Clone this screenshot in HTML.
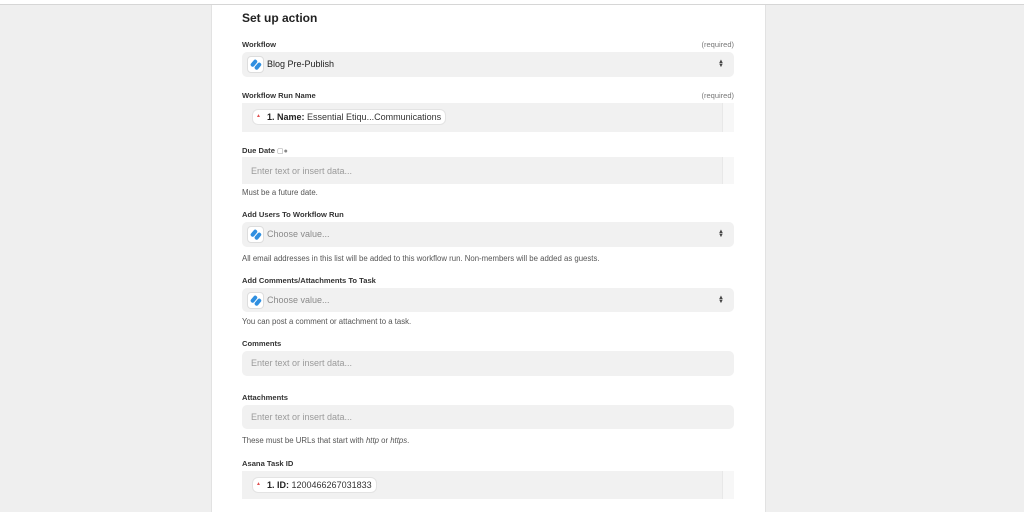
<!DOCTYPE html>
<html><head><style>
body{margin:0;width:1024px;height:512px;background:#efefef;font-family:"Liberation Sans",sans-serif;position:relative;overflow:hidden;}
.top{position:absolute;left:0;top:0;width:1024px;height:4px;background:#fff;border-bottom:1px solid #d6d6d6}
.panel{position:absolute;left:211px;top:5px;width:553px;height:507px;background:#fff;border-left:1px solid #e2e2e2;border-right:1px solid #e2e2e2}
.a{position:absolute;}
h1{position:absolute;left:242px;top:11px;margin:0;font-size:12px;font-weight:bold;color:#222}
.lbl{position:absolute;left:242px;font-size:7.6px;font-weight:bold;color:#333}
.req{position:absolute;right:290px;font-size:7.5px;color:#777}
.box{position:absolute;left:242px;width:492px;background:#f1f1f1;border-radius:5px}
.sq{border-radius:0}
.sq:after{content:"";position:absolute;right:0;top:0;width:11px;height:100%;background:#f7f7f7;border-left:1px solid #e8e8e8}
.ph{position:absolute;left:9px;font-size:9px;color:#9a9a9a}
.help{position:absolute;left:242px;font-size:7.8px;color:#555}
.ic{position:absolute;left:5px;width:15px;height:15px;background:#fff;border:1px solid #ddd;border-radius:4px}
.ic i{position:absolute;width:3.5px;height:8px;background:#2f8fe0;border-radius:2px;transform:rotate(40deg)}
.arr{position:absolute;right:10px;font-size:6px;line-height:4px;color:#444}
.pill{position:absolute;left:10px;background:#fff;border:1px solid #e3e3e3;border-radius:6px;font-size:9px;color:#333;padding:2px 4px 2px 14px;white-space:nowrap}
.pill b{color:#222}
.pill:before{content:"▲";position:absolute;left:3px;top:3px;font-size:5px;color:#e05050}
</style></head><body>
<div class="top"></div>
<div class="panel"></div>
<h1>Set up action</h1>

<div class="lbl" style="top:40px">Workflow</div><div class="req" style="top:40px">(required)</div>
<div class="box" style="top:52px;height:25px"><div class="ic" style="top:4px"><i style="left:4px;top:2px"></i><i style="left:8px;top:5px"></i></div><div class="a" style="left:25px;top:7px;font-size:9px;color:#222">Blog Pre-Publish</div><div class="arr" style="top:8px">▲<br>▼</div></div>

<div class="lbl" style="top:91px">Workflow Run Name</div><div class="req" style="top:91px">(required)</div>
<div class="box sq" style="top:103px;height:29px"><div class="pill" style="top:6px"><b>1. Name:</b> Essential Etiqu...Communications</div></div>

<div class="lbl" style="top:146px">Due Date <span style="font-weight:normal;color:#888;font-size:7px">▢●</span></div>
<div class="box sq" style="top:157px;height:27px"><div class="ph" style="top:9px">Enter text or insert data...</div></div>
<div class="help" style="top:188px">Must be a future date.</div>

<div class="lbl" style="top:210px">Add Users To Workflow Run</div>
<div class="box" style="top:222px;height:25px"><div class="ic" style="top:4px"><i style="left:4px;top:2px"></i><i style="left:8px;top:5px"></i></div><div class="a" style="left:25px;top:7px;font-size:9px;color:#8a8a8a">Choose value...</div><div class="arr" style="top:8px">▲<br>▼</div></div>
<div class="help" style="top:254px">All email addresses in this list will be added to this workflow run. Non-members will be added as guests.</div>

<div class="lbl" style="top:276px">Add Comments/Attachments To Task</div>
<div class="box" style="top:288px;height:24px"><div class="ic" style="top:4px"><i style="left:4px;top:2px"></i><i style="left:8px;top:5px"></i></div><div class="a" style="left:25px;top:7px;font-size:9px;color:#8a8a8a">Choose value...</div><div class="arr" style="top:8px">▲<br>▼</div></div>
<div class="help" style="top:317px">You can post a comment or attachment to a task.</div>

<div class="lbl" style="top:339px">Comments</div>
<div class="box" style="top:351px;height:25px"><div class="ph" style="top:7px">Enter text or insert data...</div></div>

<div class="lbl" style="top:393px">Attachments</div>
<div class="box" style="top:405px;height:24px"><div class="ph" style="top:7px">Enter text or insert data...</div></div>
<div class="help" style="top:436px">These must be URLs that start with <i>http</i> or <i>https</i>.</div>

<div class="lbl" style="top:459px">Asana Task ID</div>
<div class="box sq" style="top:471px;height:28px"><div class="pill" style="top:6px"><b>1. ID:</b> 1200466267031833</div></div>
</body></html>
